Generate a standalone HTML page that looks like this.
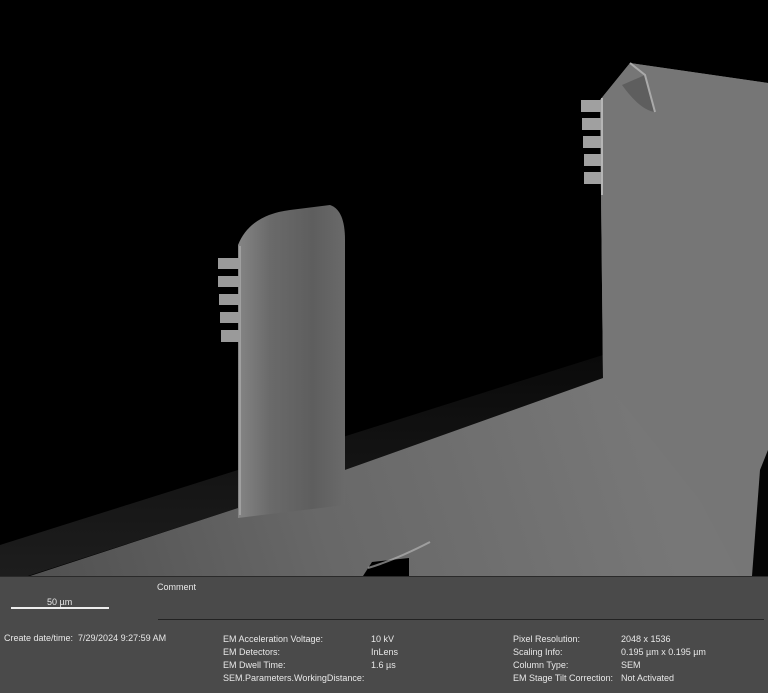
<!DOCTYPE html>
<html><head><style>
body{margin:0;width:768px;height:692px;overflow:hidden;background:#000;font-family:"Liberation Sans",sans-serif;}
#img{position:absolute;left:0;top:0;width:768px;height:576px;}
#panel{position:absolute;left:0;top:576px;width:768px;height:116px;background:#4a4a4a;border-top:1px solid #2a2a2a;color:#e8e8e8;font-size:9px;}
.t{position:absolute;white-space:nowrap;}
</style></head><body>
<svg id="img" width="768" height="576" viewBox="0 0 768 576">
<defs>
<linearGradient id="bm" gradientUnits="userSpaceOnUse" x1="0" y1="576" x2="620" y2="380"><stop offset="0" stop-color="#4e4e4e"/><stop offset="0.5" stop-color="#686868"/><stop offset="1" stop-color="#777"/></linearGradient>
<linearGradient id="lp" x1="0" y1="0" x2="1" y2="0"><stop offset="0" stop-color="#858585"/><stop offset="0.3" stop-color="#6a6a6a"/><stop offset="0.7" stop-color="#5e5e5e"/><stop offset="1" stop-color="#6a6a6a"/></linearGradient>
<linearGradient id="side" x1="0" y1="0" x2="0" y2="1"><stop offset="0" stop-color="#0a0a0a"/><stop offset="1" stop-color="#1e1e1e"/></linearGradient>
</defs>
<rect width="768" height="576" fill="#000"/>
<polygon points="0,545 238,470 603,355 603,378 238,508 0,585" fill="url(#side)"/>
<!-- beam + right pillar merged -->
<polygon points="30,576 238,508 603,378 600,100 630,63 768,83 768,576" fill="url(#bm)"/>
<polygon points="600,100 630,63 768,83 768,576 740,576 700,500 603,378" fill="#767676"/>
<polygon points="0,585 30,576 0,576" fill="#222"/>
<polygon points="363,576 372,562 409,558 409,576" fill="#000"/>
<path d="M368,568 Q395,560 430,542" stroke="#c0c0c0" stroke-width="2" fill="none" opacity="0.6"/>
<polygon points="752,576 760,470 768,450 768,576" fill="#050505"/>
<path d="M622,85 Q640,110 655,112 L645,75 Z" fill="#5e5e5e"/>
<path d="M630,63 L645,75 L655,112" stroke="#aaa" stroke-width="2" fill="none"/>
<path d="M238,518 L238,245 Q250,215 290,210 L330,205 Q345,210 345,240 L345,505 Z" fill="url(#lp)"/>
<path d="M240,246 L240,515" stroke="#a0a0a0" stroke-width="2"/>
<g fill="#9a9a9a">
<rect x="218" y="258" width="22" height="11"/><rect x="218" y="276" width="22" height="11"/><rect x="219" y="294" width="21" height="11"/><rect x="220" y="312" width="20" height="11"/><rect x="221" y="330" width="19" height="12"/>
</g>
<g fill="#a0a0a0">
<rect x="581" y="100" width="22" height="12"/><rect x="582" y="118" width="21" height="12"/><rect x="583" y="136" width="20" height="12"/><rect x="584" y="154" width="19" height="12"/><rect x="584" y="172" width="19" height="12"/>
</g>
<path d="M602,98 L602,195" stroke="#b5b5b5" stroke-width="2"/>
</svg>
<div id="panel">
<div class="t" style="left:157px;top:5px">Comment</div>
<div class="t" style="left:47px;top:20px">50 µm</div>
<div style="position:absolute;left:11px;top:30px;width:98px;height:2px;background:#eee"></div>
<div style="position:absolute;left:158px;top:42px;width:606px;height:1px;background:#222"></div>
<div class="t" style="left:4px;top:56px">Create date/time:&nbsp; 7/29/2024 9:27:59 AM</div>
<div class="t" style="left:223px;top:56px;line-height:13px">EM Acceleration Voltage:<br>EM Detectors:<br>EM Dwell Time:<br>SEM.Parameters.WorkingDistance:</div>
<div class="t" style="left:371px;top:56px;line-height:13px">10 kV<br>InLens<br>1.6 µs</div>
<div class="t" style="left:513px;top:56px;line-height:13px">Pixel Resolution:<br>Scaling Info:<br>Column Type:<br>EM Stage Tilt Correction:</div>
<div class="t" style="left:621px;top:56px;line-height:13px">2048 x 1536<br>0.195 µm x 0.195 µm<br>SEM<br>Not Activated</div>
</div>
</body></html>
